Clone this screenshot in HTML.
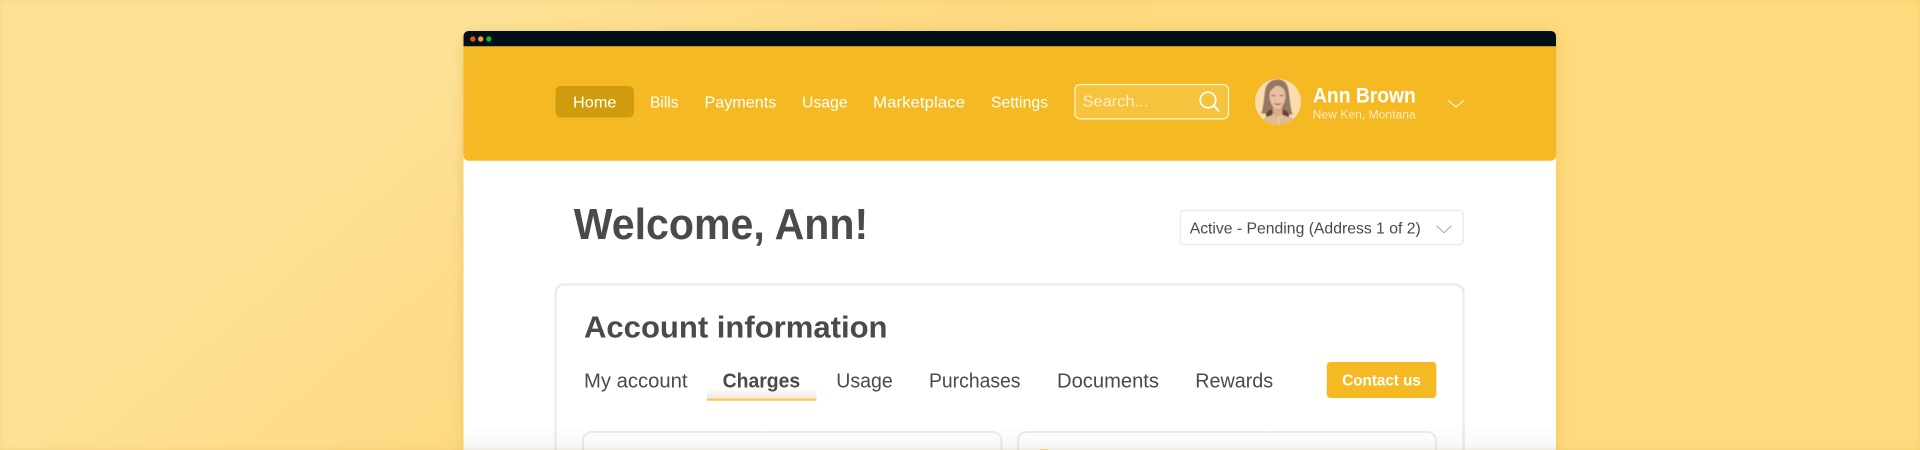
<!DOCTYPE html>
<html lang="en">
<head>
<meta charset="utf-8">
<title>Welcome, Ann!</title>
<style>
html,body{margin:0;padding:0;width:1920px;height:450px;overflow:hidden;background:#fedb7c}
svg{position:absolute;left:0;top:0;display:block}
text{font-family:"Liberation Sans",sans-serif}
.edge{position:absolute;left:0;top:0;width:1920px;height:450px;box-shadow:inset 0 0 6px rgba(205,160,60,.2);pointer-events:none}
</style>
</head>
<body>
<svg width="1920" height="450" viewBox="0 0 1920 450" xmlns="http://www.w3.org/2000/svg">
<defs>
<linearGradient id="bg" gradientUnits="userSpaceOnUse" x1="230" y1="240" x2="520" y2="580">
<stop offset="0" stop-color="#fee195"/>
<stop offset="0.7" stop-color="#fdd981"/>
<stop offset="1" stop-color="#fedb7c"/>
</linearGradient>
<filter id="sh" x="-5%" y="-10%" width="110%" height="130%">
<feDropShadow dx="0" dy="2" stdDeviation="6" flood-color="#a87a10" flood-opacity=".24"/>
</filter>
<filter id="soft" x="-5%" y="-5%" width="110%" height="110%"><feGaussianBlur stdDeviation=".55"/></filter>
<linearGradient id="fade" x1="0" y1="0" x2="0" y2="1">
<stop offset="0" stop-color="#000" stop-opacity="0"/>
<stop offset="1" stop-color="#000" stop-opacity=".035"/>
</linearGradient>
<linearGradient id="tabfade" x1="0" y1="0" x2="0" y2="1">
<stop offset="0" stop-color="#f3e4dc" stop-opacity="0"/>
<stop offset="1" stop-color="#f3e4dc"/>
</linearGradient>
<clipPath id="av"><circle cx="1278" cy="101.8" r="23"/></clipPath>
</defs>

<rect width="1920" height="450" fill="url(#bg)"/>

<!-- window -->
<path d="M463.5 36a5 5 0 0 1 5-5H1551a5 5 0 0 1 5 5V450H463.5Z" fill="#fff" filter="url(#sh)"/>
<path d="M463.5 46H1556V155.700a5 5 0 0 1-5 5H468.500a5 5 0 0 1-5-5Z" fill="#f5ba23"/>
<path d="M463.5 36a5 5 0 0 1 5-5H1551a5 5 0 0 1 5 5V46.300H463.5Z" fill="#000f18"/>
<circle cx="472.800" cy="39" r="2.700" fill="#e9540c"/>
<circle cx="480.700" cy="39" r="2.700" fill="#f5a133"/>
<circle cx="488.800" cy="39" r="2.700" fill="#12b32e"/>

<!-- nav -->
<rect x="555.500" y="86" width="78.500" height="31.500" rx="5" fill="#d09c0d"/>
<g font-size="16" fill="#fff">
<text x="573" y="107.600" textLength="43.500" lengthAdjust="spacingAndGlyphs">Home</text>
<text x="650" y="107.600" textLength="28.500" lengthAdjust="spacingAndGlyphs">Bills</text>
<text x="704.500" y="107.600" textLength="71.800" lengthAdjust="spacingAndGlyphs">Payments</text>
<text x="802" y="107.600" textLength="45.600" lengthAdjust="spacingAndGlyphs">Usage</text>
<text x="873" y="107.600" textLength="92" lengthAdjust="spacingAndGlyphs">Marketplace</text>
<text x="991" y="107.600" textLength="57" lengthAdjust="spacingAndGlyphs">Settings</text>
</g>

<!-- search -->
<rect x="1075" y="84.500" width="153.500" height="34.300" rx="5" fill="#fff" fill-opacity=".13" stroke="#fdefcb" stroke-width="1.300"/>
<text x="1082.500" y="106.500" font-size="16" fill="#fdeec6" textLength="65.700" lengthAdjust="spacingAndGlyphs">Search...</text>
<circle cx="1208" cy="100" r="7.800" fill="none" stroke="#fff" stroke-width="1.700"/>
<path d="M1213.700 105.600L1218.500 110.800" fill="none" stroke="#fff" stroke-width="1.800" stroke-linecap="round"/>

<!-- avatar -->
<g clip-path="url(#av)">
<rect x="1254" y="78" width="48" height="48" fill="#f9ddb0"/>
<g filter="url(#soft)">
<path d="M1278 79.500c-8 0-12 5-13 12-.8 6-1.500 15-3.500 22l31 1c-2.500-8-2.800-16-3.800-23-1-7-3.700-12-10.700-12Z" fill="#967860"/>
<path d="M1259 127c1-7 6-10 12-12 2 1 4 1.500 7 1.500s5-.5 7-1.500c6 1.500 11 3.500 13 11v3h-39Z" fill="#dfba92"/>
<path d="M1266 114c1.500-3 4-4 6-5l.5 6-6.500 2ZM1289 114c-1.500-3-4-4-6-5l-.5 6 6.500 2Z" fill="#5f4536"/>
<path d="M1273 106h9v9c-2 2.500-7 2.500-9 0Z" fill="#dca98a"/>
<path d="M1269.500 96c0-6 3-10 8-10s8 4 8 10-3.500 13-8 13-8-7-8-13Z" fill="#e9bfa3"/>
<path d="M1271.500 95.500h4M1279.800 95.500h4" stroke="#75553f" stroke-width="1.100"/>
<path d="M1274.500 103.500c2 1.200 4.500 1.200 6.500 0" stroke="#b5605a" stroke-width="1.400" fill="none"/>
<path d="M1269 92c3-2 5-5 8.500-7 3 1 7 3 8.500 7-1-7-3.500-9-8.500-9s-7.500 3-8.500 9Z" fill="#967860"/>
</g>
<path d="M1278.500 116v10" stroke="#f0d8ba" stroke-width=".8"/>
</g>

<text x="1313" y="102.700" font-size="21" font-weight="700" fill="#fff" textLength="102.800" lengthAdjust="spacingAndGlyphs">Ann Brown</text>
<text x="1312.700" y="118.700" font-size="11.500" fill="#fdebbd" textLength="103" lengthAdjust="spacingAndGlyphs">New Ken, Montana</text>
<path d="M1448.300 100.500L1456 107L1463.700 100.500" fill="none" stroke="#fff" stroke-width="1"/>

<!-- heading -->
<text x="573.700" y="239" font-size="44" font-weight="700" fill="#4a4a4a" textLength="294.500" lengthAdjust="spacingAndGlyphs">Welcome, Ann!</text>

<!-- dropdown -->
<rect x="1180.300" y="210.400" width="282.800" height="34.200" rx="3.500" fill="#fff" stroke="#ececec" stroke-width="1.500"/>
<text x="1189.700" y="233.500" font-size="16" fill="#4a4a4a" textLength="231" lengthAdjust="spacingAndGlyphs">Active - Pending (Address 1 of 2)</text>
<path d="M1436.500 225.800L1444 232.700L1451.500 225.800" fill="none" stroke="#a5a5a5" stroke-width="1"/>

<!-- main card -->
<path d="M555.500 450V293a8.500 8.500 0 0 1 8.500-8.500H1455a8.500 8.500 0 0 1 8.500 8.500V450" fill="#fff" stroke="#ececec" stroke-width="2.400"/>
<text x="584" y="337.500" font-size="31" font-weight="700" fill="#4a4a4a" textLength="303.500" lengthAdjust="spacingAndGlyphs">Account information</text>

<!-- tabs -->
<rect x="707" y="388" width="109.500" height="11" fill="url(#tabfade)"/>
<rect x="707" y="398.700" width="109.500" height="2" fill="#f8c44a"/>
<g font-size="20" fill="#4a4a4a">
<text x="584" y="387.400" textLength="103.500" lengthAdjust="spacingAndGlyphs">My account</text>
<text x="722.600" y="387.400" font-weight="700" textLength="77.600" lengthAdjust="spacingAndGlyphs">Charges</text>
<text x="836.300" y="387.400" textLength="56.400" lengthAdjust="spacingAndGlyphs">Usage</text>
<text x="929" y="387.400" textLength="91.500" lengthAdjust="spacingAndGlyphs">Purchases</text>
<text x="1057" y="387.400" textLength="102" lengthAdjust="spacingAndGlyphs">Documents</text>
<text x="1195.300" y="387.400" textLength="77.800" lengthAdjust="spacingAndGlyphs">Rewards</text>
</g>

<!-- contact -->
<rect x="1326.800" y="362" width="109.500" height="36" rx="3.500" fill="#f5ba23"/>
<text x="1342.300" y="385.600" font-size="16" font-weight="700" fill="#fff" textLength="78.500" lengthAdjust="spacingAndGlyphs">Contact us</text>

<!-- inner cards -->
<path d="M583 450V440.500a8.500 8.500 0 0 1 8.500-8.500H993a8.500 8.500 0 0 1 8.500 8.500V450" fill="#fff" stroke="#ececec" stroke-width="2"/>
<path d="M1018 450V440.500a8.500 8.500 0 0 1 8.500-8.500H1427.500a8.500 8.500 0 0 1 8.500 8.500V450" fill="#fff" stroke="#ececec" stroke-width="2"/>
<rect x="1040" y="449" width="8" height="1" fill="#f8d987"/>

<!-- bottom fade -->
<rect x="463.500" y="425" width="1092.500" height="25" fill="url(#fade)"/>
</svg>
<div class="edge"></div>
</body>
</html>
